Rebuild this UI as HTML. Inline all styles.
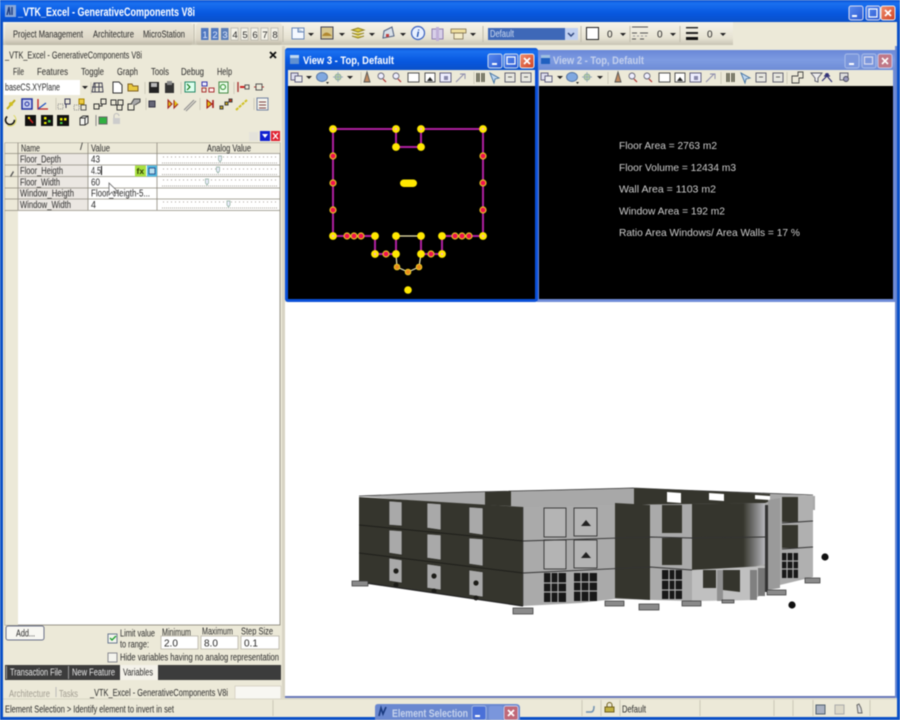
<!DOCTYPE html>
<html><head><meta charset="utf-8">
<style>
html,body{margin:0;padding:0;background:#ece9d8;width:900px;height:720px;overflow:hidden}
svg{display:block;position:absolute;left:0;top:0;filter:blur(.4px)}
text{font-family:"Liberation Sans",sans-serif;font-size:10px;fill:#2a2a2a}
.b{font-weight:bold;fill:#fff;font-size:11.5px}
.w{fill:#e8e8e8}
.t{font-size:10.5px;fill:#cfcfcf}
</style></head><body>
<svg width="900" height="720" viewBox="0 0 900 720" xmlns="http://www.w3.org/2000/svg">
<defs>
<linearGradient id="tb" x1="0" y1="0" x2="0" y2="1"><stop offset="0" stop-color="#0a4fd0"/><stop offset=".15" stop-color="#1a70f0"/><stop offset=".6" stop-color="#0858e0"/><stop offset="1" stop-color="#0a50c8"/></linearGradient>
<linearGradient id="ti" x1="0" y1="0" x2="0" y2="1"><stop offset="0" stop-color="#6a88d8"/><stop offset=".5" stop-color="#7d9be2"/><stop offset="1" stop-color="#6e8cd6"/></linearGradient>
<linearGradient id="tl" x1="0" y1="0" x2="0" y2="1"><stop offset="0" stop-color="#f6f4ea"/><stop offset=".7" stop-color="#e6e2d2"/><stop offset="1" stop-color="#c8c4b4"/></linearGradient>
<linearGradient id="tk" x1="0" y1="0" x2="0" y2="1"><stop offset="0" stop-color="#ece8da"/><stop offset=".75" stop-color="#dcd6c6"/><stop offset="1" stop-color="#bcb7a6"/></linearGradient>
<linearGradient id="cyl" x1="0" y1="0" x2="1" y2="0"><stop offset="0" stop-color="#35352d"/><stop offset=".7" stop-color="#35352d"/><stop offset="1" stop-color="#b8b8bc"/></linearGradient>
<linearGradient id="btn" x1="0" y1="0" x2="1" y2="1"><stop offset="0" stop-color="#5a8cf0"/><stop offset="1" stop-color="#2a58d0"/></linearGradient>
<linearGradient id="cls" x1="0" y1="0" x2="1" y2="1"><stop offset="0" stop-color="#f09070"/><stop offset="1" stop-color="#d04020"/></linearGradient>
</defs>

<!-- main frame -->
<rect width="900" height="720" fill="#0a50c8"/>
<rect y="0" width="900" height="22" fill="url(#tb)"/>
<rect x="3" y="22" width="894" height="695" fill="#ece9d8"/>
<!-- main title -->
<rect x="5" y="5" width="11" height="12" fill="#8aa8d8"/><path d="M7 15 L9 7 L10 15 M12 7 L12 15" stroke="#1a3a80" stroke-width="1.4" fill="none"/>
<text x="18" y="16" class="b" textLength="177" lengthAdjust="spacingAndGlyphs">_VTK_Excel - GenerativeComponents V8i</text>
<rect x="849" y="6" width="14" height="14" rx="2" fill="url(#btn)" stroke="#dde"/><rect x="852" y="15" width="5" height="2" fill="#fff"/>
<rect x="866" y="6" width="14" height="14" rx="2" fill="url(#btn)" stroke="#dde"/><rect x="869" y="9" width="8" height="8" fill="none" stroke="#fff" stroke-width="1.2"/>
<rect x="881" y="6" width="14" height="14" rx="2" fill="url(#cls)" stroke="#eee"/><path d="M885 10 L891 16 M891 10 L885 16" stroke="#fff" stroke-width="1.8"/>

<!-- main toolbar -->
<rect x="3" y="22" width="730" height="23" fill="url(#tl)"/>
<rect x="733" y="22" width="164" height="23" fill="#ece9d8"/>
<rect x="5" y="23" width="188" height="22" rx="3" fill="url(#tk)"/>
<rect x="196" y="23" width="86" height="22" rx="3" fill="url(#tk)"/>
<text x="13" y="37.500" textLength="70" lengthAdjust="spacingAndGlyphs">Project Management</text>
<text x="93" y="37.500" textLength="41" lengthAdjust="spacingAndGlyphs">Architecture</text>
<text x="143" y="37.500" textLength="42" lengthAdjust="spacingAndGlyphs">MicroStation</text>
<g fill="#f4f2e8" stroke="#a8a8a0" stroke-width=".6">
<rect x="231" y="28" width="7" height="12"/><rect x="241" y="28" width="7" height="12"/><rect x="251" y="28" width="7" height="12"/><rect x="261" y="28" width="7" height="12"/><rect x="271" y="28" width="7" height="12"/>
</g>
<rect x="201" y="28" width="7.5" height="12" fill="#4f78c0"/><rect x="211" y="28" width="7.5" height="12" fill="#4f78c0"/><rect x="221" y="28" width="7.5" height="12" fill="#5a7eb8"/>
<g text-anchor="middle"><text x="205" y="38" style="fill:#dfe8ff;font-size:9.5px">1</text><text x="215" y="38" style="fill:#dfe8ff;font-size:9.5px">2</text><text x="225" y="38" style="fill:#dfe8ff;font-size:9.5px">3</text><text x="235" y="38" style="font-size:9.5px">4</text><text x="245" y="38" style="font-size:9.5px">5</text><text x="255" y="38" style="font-size:9.5px">6</text><text x="265" y="38" style="font-size:9.5px">7</text><text x="275" y="38" style="font-size:9.5px">8</text></g>
<g fill="#222">
<path d="M308 33h6l-3 3z"/><path d="M339 33h6l-3 3z"/><path d="M369 33h6l-3 3z"/><path d="M400 33h6l-3 3z"/><path d="M470 33h6l-3 3z"/>
<path d="M620 33h6l-3 3z"/><path d="M670 33h6l-3 3z"/><path d="M720 33h6l-3 3z"/>
</g>
<rect x="292" y="28" width="12" height="11" fill="#f4f8ff" stroke="#6a88b8"/><path d="M298 28v4h6" fill="#bcd" stroke="#6a88b8"/>
<rect x="321" y="27" width="12" height="12" fill="#d8c890" stroke="#445"/><path d="M322 36 q4 -7 10 0z" fill="#b08830"/>
<path d="M352 30 l6-2 6 2 -6 2z M352 33 l6 2 6-2 M352 36 l6 2 6-2" fill="#e0d040" stroke="#908020"/>
<path d="M383 38 L384 31 L392 27 L394 36z" fill="#d8e0e8" stroke="#506080"/><rect x="386" y="34" width="3" height="3" fill="#c04040"/>
<circle cx="418" cy="33" r="6.5" fill="#e8f0ff" stroke="#3860c0" stroke-width="1.2"/><text x="416.5" y="37" style="fill:#2050b0;font-style:italic;font-weight:bold;font-size:10px">i</text>
<rect x="432" y="29" width="11" height="10" fill="#d8d0e8" stroke="#9080b0"/><rect x="436" y="27" width="3" height="14" fill="#c0b0d8"/>
<rect x="451" y="29" width="15" height="4" fill="#f0e0a0" stroke="#706040" stroke-width=".7"/><rect x="454" y="33" width="9" height="6" fill="#f4ecc8" stroke="#706040" stroke-width=".7"/>
<rect x="488" y="28" width="90" height="12" fill="#3e68b8"/><text x="490" y="37" textLength="24" lengthAdjust="spacingAndGlyphs" style="fill:#d0dcf0">Default</text>
<rect x="565" y="28" width="13" height="12" fill="#c0d0f0"/><path d="M568 33 l3 3 3-3" stroke="#304880" stroke-width="1.5" fill="none"/>
<rect x="586.5" y="27.5" width="12" height="12" fill="#fff" stroke="#222"/>
<text x="607" y="37.500">0</text><text x="657" y="37.500">0</text><text x="707" y="37.500">0</text>
<path d="M632 27h16M632 33h5M640 33h8M632 39h4M640 39h4" stroke="#555"/><path d="M633 36h14" stroke="#999" stroke-dasharray="2 2"/>
<rect x="686" y="27" width="12" height="1.4" fill="#222"/><rect x="686" y="32" width="12" height="2" fill="#222"/><rect x="686" y="37" width="12" height="3" fill="#111"/>
<g stroke="#c0bcac"><path d="M194 24v20M283 26v16M581 26v16M630 26v16M680 26v16M483 26v16"/></g>

<!-- left panel -->
<rect x="4" y="46" width="278" height="652" fill="#ece9d8"/>
<rect x="282" y="46" width="3" height="652" fill="#d8d4c4"/>
<text x="5" y="58.500" textLength="137" lengthAdjust="spacingAndGlyphs">_VTK_Excel - GenerativeComponents V8i</text>
<path d="M270 52 L276 58 M276 52 L270 58" stroke="#111" stroke-width="1.8"/>
<text x="13" y="75" textLength="11" lengthAdjust="spacingAndGlyphs">File</text><text x="37" y="75" textLength="31" lengthAdjust="spacingAndGlyphs">Features</text><text x="81" y="75" textLength="23" lengthAdjust="spacingAndGlyphs">Toggle</text><text x="117" y="75" textLength="21" lengthAdjust="spacingAndGlyphs">Graph</text><text x="151" y="75" textLength="18" lengthAdjust="spacingAndGlyphs">Tools</text><text x="181" y="75" textLength="23" lengthAdjust="spacingAndGlyphs">Debug</text><text x="217" y="75" textLength="15" lengthAdjust="spacingAndGlyphs">Help</text>
<rect x="4" y="80" width="76" height="15" fill="#fff"/><text x="5" y="90.500" textLength="55" lengthAdjust="spacingAndGlyphs">baseCS.XYPlane</text>
<path d="M82 86h6l-3 3z" fill="#222"/>
<!-- icons row 1 -->
<g stroke-width="1" fill="none">
<path d="M92 92l2-9 8 0 1 9z M95 83v9M99 83v9M92 87h11" stroke="#445"/>
<path d="M113 82h6l3 3v8h-9z" fill="#fff" stroke="#333"/>
<path d="M128 91v-7h4l1 2h5v5z" fill="#e8c840" stroke="#806020"/>
<rect x="149" y="82" width="10" height="11" fill="#222"/><rect x="151" y="83" width="6" height="4" fill="#bbb"/>
<rect x="165" y="83" width="9" height="10" fill="#333"/><rect x="167" y="81" width="5" height="4" fill="#888"/>
<rect x="185" y="82" width="10" height="10" fill="#dfe" stroke="#286"/><path d="M187 84l3 3-3 3" stroke="#060"/>
<rect x="202" y="82" width="5" height="4" stroke="#33a" fill="#eef"/><rect x="209" y="88" width="5" height="4" stroke="#a33" fill="#fee"/><rect x="202" y="88" width="4" height="4" stroke="#a33"/>
<rect x="219" y="82" width="9" height="11" fill="#efe" stroke="#484"/><circle cx="223" cy="87" r="2.5" stroke="#282"/>
<path d="M238 82v10" stroke="#a33" stroke-width="1.4"/><path d="M240 87h5" stroke="#c22" stroke-width="2"/><rect x="245" y="85" width="4" height="4" stroke="#555"/>
<rect x="256" y="84" width="6" height="6" stroke="#555"/><path d="M254 87h2M262 87h2" stroke="#a33"/>
</g>
<!-- icons row 2 -->
<g stroke-width="1" fill="none">
<path d="M7 109l8-9" stroke="#c0b020" stroke-width="2"/><circle cx="11" cy="104" r="2" fill="#d0c020"/>
<rect x="22" y="99" width="10" height="10" stroke="#2030a0" stroke-width="1.5" fill="#c8d0f0"/><circle cx="27" cy="104" r="2" stroke="#2030a0"/>
<path d="M38 99v10h10" stroke="#c02020" stroke-width="1.3"/><path d="M38 109l8-6" stroke="#2050c0" stroke-width="1.3"/>
<rect x="58" y="104" width="5" height="5" stroke="#888" stroke-dasharray="1 1"/><rect x="65" y="99" width="5" height="5" stroke="#335"/><path d="M66 104v4" stroke="#335"/>
<rect x="74" y="105" width="5" height="5" stroke="#888" stroke-dasharray="1 1"/><rect x="79" y="99" width="5" height="5" stroke="#a80" fill="#ec4"/><rect x="81" y="105" width="5" height="5" stroke="#555"/>
<rect x="94" y="104" width="5" height="5" stroke="#333"/><rect x="101" y="99" width="5" height="5" stroke="#333"/><path d="M99 106h3v-2" stroke="#333"/>
<rect x="111" y="100" width="5" height="5" stroke="#333"/><rect x="118" y="100" width="5" height="5" stroke="#333"/><rect x="117" y="105" width="5" height="5" stroke="#333"/>
<rect x="128" y="104" width="6" height="6" stroke="#333"/><path d="M131 104l3-5h6v3l-5 3" fill="#aaa" stroke="#444"/>
<rect x="149" y="101" width="6" height="6" fill="#667" stroke="#334"/>
<path d="M168 100v8l4-4zM174 100v8l4-4" fill="#e0c010" stroke="#a02020"/>
<path d="M184 110l10-10M186 111l10-10" stroke="#909090" stroke-width="1.2"/>
<path d="M207 100v8l5-4z" fill="#e0c010" stroke="#a01010"/><path d="M213 100v8" stroke="#a01010" stroke-width="1.5"/>
<rect x="220" y="106" width="3" height="3" fill="#c0a010" stroke="#444"/><rect x="225" y="102" width="3" height="3" fill="#c0a010" stroke="#444"/><rect x="229" y="99" width="3" height="3" fill="#c03010" stroke="#444"/>
<path d="M236 110l11-10" stroke="#d0c020" stroke-width="2" stroke-dasharray="3 1"/>
<rect x="257" y="98" width="11" height="12" fill="#f4f4ec" stroke="#7080a0"/><path d="M259 102h7M259 105h7M259 108h7" stroke="#804040"/>
</g>
<!-- icons row 3 -->
<g fill="none">
<circle cx="10" cy="120" r="4.5" stroke="#111" stroke-width="1.6" stroke-dasharray="18 10"/><circle cx="10" cy="120" r="6" stroke="#dcd860" stroke-width="1" stroke-dasharray="12 20"/>
<rect x="25" y="115" width="11" height="11" fill="#111"/><path d="M28 117l5 6" stroke="#d02020" stroke-width="1.4"/><rect x="28" y="117" width="2" height="2" fill="#ee0"/>
<rect x="41" y="115" width="12" height="11" fill="#111"/><rect x="44" y="117" width="2.5" height="2.5" fill="#ee0"/><rect x="48" y="120" width="2.5" height="2.5" fill="#4c4"/><rect x="44" y="122" width="2.5" height="2" fill="#ee0"/>
<rect x="57" y="115" width="12" height="11" fill="#111"/><rect x="60" y="118" width="2.5" height="2.5" fill="#ee0"/><rect x="64" y="118" width="2.5" height="2.5" fill="#ee0"/><rect x="60" y="122" width="2.5" height="2" fill="#4c4"/>
<path d="M80 118l3-2h5v7l-3 2h-5z M80 118h5v7M85 118l3-2" stroke="#333" fill="#f4f4f0"/>
<path d="M96 115v11" stroke="#888"/><rect x="99" y="117" width="8" height="7" fill="#30b040" stroke="#666"/>
<rect x="113" y="118" width="7" height="6" fill="#ccc"/><path d="M114 118v-2a2.500 2.500 0 0 1 5 0" stroke="#bbb"/>
</g>
<g stroke="#cfcbbb"><path d="M91 82v12M145 82v12M181 82v12M234 82v12M56 98v12M146 98v12M200 98v12M254 98v12"/></g>

<!-- table header icons -->
<rect x="260" y="131" width="10" height="10" fill="#1020d0"/><path d="M262 134h6l-3 4z" fill="#fff"/>
<rect x="271" y="131" width="9" height="10" fill="#e02030"/><path d="M273 133l5 6M278 133l-5 6" stroke="#fff" stroke-width="1.3"/>
<rect x="249" y="132" width="9" height="9" fill="#e4e2da"/>
<!-- table -->
<rect x="5" y="143" width="275" height="482" fill="#fff" stroke="#807c70" stroke-width=".8"/>
<rect x="5" y="143" width="275" height="10" fill="#ece9d8"/>
<rect x="5" y="153" width="13" height="472" fill="#ece9d8"/>
<rect x="18" y="153" width="70" height="57" fill="#ebe7e2"/>
<g stroke="#8e8a7e" stroke-width=".8">
<path d="M18 143v67M88 143v67M157 143v67"/>
<path d="M5 153.500h275M5 165h275M5 176.500h275M5 188h275M5 199h275M5 210.500h275" />
</g>
<text x="21" y="151.500" textLength="19" lengthAdjust="spacingAndGlyphs">Name</text><text x="80" y="150">/</text><text x="91" y="151.500" textLength="19" lengthAdjust="spacingAndGlyphs">Value</text><text x="207" y="151.500" textLength="44" lengthAdjust="spacingAndGlyphs">Analog Value</text>
<text x="20" y="162.500" textLength="41" lengthAdjust="spacingAndGlyphs">Floor_Depth</text><text x="20" y="174" textLength="43" lengthAdjust="spacingAndGlyphs">Floor_Heigth</text><text x="20" y="185.500" textLength="40" lengthAdjust="spacingAndGlyphs">Floor_Width</text><text x="20" y="196.500" textLength="54" lengthAdjust="spacingAndGlyphs">Window_Heigth</text><text x="20" y="208" textLength="51" lengthAdjust="spacingAndGlyphs">Window_Width</text>
<text x="91" y="162.500" textLength="9" lengthAdjust="spacingAndGlyphs">43</text><text x="91" y="174" textLength="10" lengthAdjust="spacingAndGlyphs">4.5</text><text x="91" y="185.500" textLength="9" lengthAdjust="spacingAndGlyphs">60</text><text x="91" y="196.500" textLength="59" lengthAdjust="spacingAndGlyphs">Floor_Heigth-5...</text><text x="91" y="208" textLength="5" lengthAdjust="spacingAndGlyphs">4</text>
<path d="M101.500 166v9" stroke="#111"/>
<path d="M10 176l3-5 1 1-3 5z" fill="#555"/>
<rect x="135" y="165.500" width="11" height="11" fill="#a8e040"/><text x="136.500" y="174" style="font-size:8.500px;font-weight:bold;fill:#304000">fx</text>
<rect x="147" y="165.500" width="10" height="11" fill="#50b8e0"/><rect x="149" y="168" width="6" height="6" fill="#b8e0f0" stroke="#204080" stroke-width=".8"/>
<!-- sliders -->
<g stroke="#a8a49c">
<path d="M162 163h116" stroke-dasharray="1 1"/><path d="M162 174.500h116" stroke-dasharray="1 1"/><path d="M162 186h116" stroke-dasharray="1 1"/><path d="M162 208h116" stroke-dasharray="1 1"/>
<path d="M163 157h116" stroke-dasharray="1 3"/><path d="M163 169h116" stroke-dasharray="1 3"/><path d="M163 180h116" stroke-dasharray="1 3"/><path d="M163 202h116" stroke-dasharray="1 3"/>
</g>
<g fill="#eef" stroke="#8a9" stroke-width=".7"><path d="M218.500 156h3v4l-1.500 2-1.500-2z"/><path d="M216.500 167h3v4l-1.500 2-1.500-2z"/><path d="M205.500 179h3v4l-1.500 2-1.500-2z"/><path d="M227 201h3v4l-1.500 2-1.500-2z"/></g>
<!-- cursor -->
<path d="M109 183v12l3-3 2 4 1.500-.7-2-4h4z" fill="#fff" stroke="#555" stroke-width=".7"/>

<!-- bottom controls -->
<rect x="6" y="626" width="38" height="14" rx="2" fill="#f8f7f2" stroke="#6a7088"/><text x="16" y="636.500" textLength="19" lengthAdjust="spacingAndGlyphs">Add...</text>
<rect x="108" y="634" width="9" height="9" fill="#f4f4ee" stroke="#6a7a90"/><path d="M110 638l2 2 4-4" stroke="#20a030" stroke-width="1.4" fill="none"/>
<text x="120" y="636.500" textLength="35" lengthAdjust="spacingAndGlyphs">Limit value</text><text x="120" y="647.500" textLength="29" lengthAdjust="spacingAndGlyphs">to range:</text>
<text x="162" y="635.500" textLength="29" lengthAdjust="spacingAndGlyphs">Minimum</text><text x="202" y="634.500" textLength="31" lengthAdjust="spacingAndGlyphs">Maximum</text><text x="241" y="634.500" textLength="32" lengthAdjust="spacingAndGlyphs">Step Size</text>
<g fill="#fff" stroke="#b8b4a8" stroke-width=".8"><rect x="161" y="636" width="37" height="13"/><rect x="201" y="636" width="37" height="13"/><rect x="241" y="636" width="38" height="13"/></g>
<text x="164" y="646.500">2.0</text><text x="204" y="646.500">8.0</text><text x="244" y="646.500">0.1</text>
<rect x="108" y="653" width="9" height="9" fill="#f4f4ee" stroke="#8a8a90"/>
<text x="120" y="660.500" textLength="159" lengthAdjust="spacingAndGlyphs">Hide variables having no analog representation</text>
<rect x="5" y="665" width="276" height="15" fill="#3c3c3c"/>
<rect x="120" y="665" width="38" height="15" fill="#f4f2ea"/>
<text x="10" y="675.500" textLength="52" lengthAdjust="spacingAndGlyphs" class="w">Transaction File</text><text x="72" y="675.500" textLength="43" lengthAdjust="spacingAndGlyphs" class="w">New Feature</text><text x="123" y="675.500" textLength="30" lengthAdjust="spacingAndGlyphs">Variables</text>
<path d="M6.500 666v13M68.500 666v13" stroke="#999"/>
<text x="9" y="697" textLength="41" lengthAdjust="spacingAndGlyphs" style="fill:#a09c90">Architecture</text><path d="M56 687v10" stroke="#bbb"/><text x="59" y="697" textLength="19" lengthAdjust="spacingAndGlyphs" style="fill:#a09c90">Tasks</text>
<text x="90" y="696" textLength="138" lengthAdjust="spacingAndGlyphs">_VTK_Excel - GenerativeComponents V8i</text>
<rect x="235" y="686" width="46" height="13" fill="#f8f7f2" stroke="#c8c4b4" stroke-width=".6"/>

<!-- white model area -->
<rect x="285" y="302" width="610" height="394" fill="#fff"/>
<rect x="285" y="696" width="610" height="2" fill="#6878b8"/>
<rect x="895" y="46" width="2" height="652" fill="#6a88d0"/>

<!-- View 2 -->
<rect x="537" y="50" width="358" height="252" fill="#6f8cd8"/>
<rect x="537" y="50" width="358" height="20" fill="url(#ti)"/>
<rect x="541" y="55" width="9" height="9" fill="#2060c0"/><rect x="541" y="55" width="9" height="3" fill="#a0c0e0"/>
<text x="553" y="64" textLength="91" lengthAdjust="spacingAndGlyphs" style="fill:#c4d0ec;font-weight:bold;font-size:11px">View 2 - Top, Default</text>
<rect x="845" y="54" width="14" height="14" rx="2" fill="#7a96dc" stroke="#a8bce8"/><rect x="849" y="63" width="5" height="2" fill="#fff"/>
<rect x="862" y="54" width="14" height="14" rx="2" fill="#7a96dc" stroke="#a8bce8"/><rect x="864.500" y="57" width="8" height="7" fill="none" stroke="#dde" stroke-width="1.200"/>
<rect x="878" y="54" width="14" height="14" rx="2" fill="#c07888" stroke="#c8c8e8"/><path d="M882 58l6 6M888 58l-6 6" stroke="#fff" stroke-width="1.600"/>
<rect x="539" y="70" width="354" height="16" fill="#ece9d8"/>
<rect x="539" y="86" width="354" height="213" fill="#000"/>

<!-- View 3 -->
<rect x="285" y="48" width="253" height="254" rx="3" fill="#0a50d8"/>
<rect x="285" y="48" width="253" height="22" rx="3" fill="url(#tb)"/>
<rect x="290" y="55" width="9" height="9" fill="#6090d0"/><rect x="290" y="55" width="9" height="3" fill="#c0d8f0"/>
<text x="303" y="64" textLength="91" lengthAdjust="spacingAndGlyphs" class="b" style="font-size:11px">View 3 - Top, Default</text>
<rect x="488" y="54" width="14" height="14" rx="2" fill="url(#btn)" stroke="#cde"/><rect x="492" y="63" width="5" height="2" fill="#fff"/>
<rect x="504" y="54" width="14" height="14" rx="2" fill="url(#btn)" stroke="#cde"/><rect x="507" y="57" width="8" height="7" fill="none" stroke="#fff" stroke-width="1.200"/>
<rect x="520" y="54" width="14" height="14" rx="2" fill="url(#cls)" stroke="#eee"/><path d="M524 58l6 6M530 58l-6 6" stroke="#fff" stroke-width="1.800"/>
<rect x="288" y="70" width="247" height="16" fill="#ece9d8"/>
<rect x="288" y="86" width="247" height="213" fill="#000"/>

<!-- view toolbars -->
<g fill="none" stroke-width=".9">
<rect x="291" y="73" width="7" height="7" stroke="#557" fill="#dde"/><rect x="295" y="76" width="7" height="6" stroke="#557" fill="#eee"/><path d="M306 76h6l-3 3z" fill="#222"/>
<ellipse cx="322" cy="77" rx="5.500" ry="4.500" fill="#80a8e0" stroke="#5070a0"/><path d="M326 82h3l-1.500 2z" fill="#222"/>
<circle cx="338" cy="77" r="3" fill="#c0d8a0" stroke="#8a9"/><path d="M338 72v10M333 77h10" stroke="#9ab"/><path d="M347 76h6l-3 3z" fill="#222"/>
<path d="M367 72l-3 10h6z" fill="#c08a60" stroke="#555"/>
<circle cx="381" cy="76" r="3" fill="#eef" stroke="#667"/><path d="M383 79l3 3" stroke="#b03030" stroke-width="1.200"/>
<circle cx="396" cy="76" r="3" fill="#eef" stroke="#667"/><path d="M398 79l3 3" stroke="#b03030" stroke-width="1.200"/>
<rect x="408" y="73" width="11" height="9" fill="#fff" stroke="#444"/>
<rect x="425" y="73" width="10" height="9" fill="#fff" stroke="#444"/><path d="M427 81l3-4 3 4z" fill="#222"/>
<rect x="440" y="73" width="11" height="9" fill="#eef" stroke="#557"/><rect x="444" y="76" width="4" height="4" fill="#88a"/>
<path d="M456 82l8-8M460 74h5v5" stroke="#88a"/>
<path d="M477 73v9M479 73v9M482 73v9M484 73v9" stroke="#443" stroke-width="1.300"/>
<path d="M490 73l9 5-4 1-1 4z" fill="#c0d8f0" stroke="#4070a0"/>
<rect x="505" y="73" width="10" height="9" fill="#e8e8e0" stroke="#556"/><path d="M508 77h4" stroke="#555"/>
<rect x="521" y="73" width="10" height="9" fill="#e8e8e0" stroke="#556"/><path d="M524 77h4" stroke="#555"/>
</g>
<g fill="none" stroke-width=".9">
<rect x="541" y="73" width="7" height="7" stroke="#557" fill="#dde"/><rect x="545" y="76" width="7" height="6" stroke="#557" fill="#eee"/><path d="M557 76h6l-3 3z" fill="#222"/>
<ellipse cx="572" cy="77" rx="5.500" ry="4.500" fill="#80a8e0" stroke="#5070a0"/><path d="M576 82h3l-1.500 2z" fill="#222"/>
<circle cx="587" cy="77" r="3" fill="#c0d8a0" stroke="#8a9"/><path d="M587 72v10M582 77h10" stroke="#9ab"/><path d="M597 76h6l-3 3z" fill="#222"/>
<path d="M618 72l-3 10h6z" fill="#c08a60" stroke="#555"/>
<circle cx="632" cy="76" r="3" fill="#eef" stroke="#667"/><path d="M634 79l3 3" stroke="#b03030" stroke-width="1.200"/>
<circle cx="647" cy="76" r="3" fill="#eef" stroke="#667"/><path d="M649 79l3 3" stroke="#b03030" stroke-width="1.200"/>
<rect x="659" y="73" width="11" height="9" fill="#fff" stroke="#444"/>
<rect x="675" y="73" width="10" height="9" fill="#fff" stroke="#444"/><path d="M677 81l3-4 3 4z" fill="#222"/>
<rect x="690" y="73" width="11" height="9" fill="#eef" stroke="#557"/><rect x="694" y="76" width="4" height="4" fill="#88a"/>
<path d="M706 82l8-8M710 74h5v5" stroke="#88a"/>
<path d="M727 73v9M729 73v9M732 73v9M734 73v9" stroke="#443" stroke-width="1.300"/>
<path d="M741 73l9 5-4 1-1 4z" fill="#c0d8f0" stroke="#4070a0"/>
<rect x="756" y="73" width="10" height="9" fill="#e8e8e0" stroke="#556"/><path d="M759 77h4" stroke="#555"/>
<rect x="773" y="73" width="10" height="9" fill="#e8e8e0" stroke="#556"/><path d="M776 77h4" stroke="#555"/>
<path d="M792 76h6v-4h5v6h-4v5h-7z" stroke="#444"/>
<path d="M811 73h11l-4 5v4l-3-1v-3z" fill="#eee" stroke="#556"/>
<circle cx="827" cy="75" r="2" fill="#337"/><path d="M822 81l5-5 5 6M824 76h6" stroke="#337" stroke-width="1.200"/>
<rect x="840" y="73" width="8" height="7" fill="#ddd" stroke="#556"/><circle cx="846" cy="79" r="2.500" fill="#99b" stroke="#445"/>
</g>
<path d="M361 72v12M474 72v12M608 72v12M721 72v12M787 72v12" stroke="#cfcbbb"/>

<!-- plan -->
<g fill="none" stroke-linejoin="miter">
<path d="M333 129H396V147H421V129H483V236H442V254H421V236M396 236V254H375V236H333V129" stroke="#b020a0" stroke-width="2"/>
<path d="M396 236H421M396 254L397 267 408 272 419 267 421 254" stroke="#f0e8b0" stroke-width="1.200"/>
</g>
<g fill="#ffe800">
<circle cx="333" cy="129" r="3.900"/><circle cx="396" cy="129" r="3.900"/><circle cx="421" cy="129" r="3.900"/><circle cx="483" cy="129" r="3.900"/><circle cx="396" cy="147" r="3.900"/><circle cx="421" cy="147" r="3.900"/>
<circle cx="333" cy="236" r="3.900"/><circle cx="483" cy="236" r="3.900"/>
<circle cx="375" cy="236" r="3.900"/><circle cx="396" cy="236" r="3.900"/><circle cx="421" cy="236" r="3.900"/><circle cx="442" cy="236" r="3.900"/>
<circle cx="375" cy="254" r="3.900"/><circle cx="396" cy="254" r="3.900"/><circle cx="421" cy="254" r="3.900"/><circle cx="442" cy="254" r="3.900"/>
<circle cx="408" cy="290" r="3.800"/><rect x="400" y="179.500" width="17" height="7.500" rx="3.700"/>
</g>
<g fill="#f01050" stroke="#e8c020" stroke-width="1.200">
<circle cx="333" cy="156" r="3"/><circle cx="333" cy="183" r="3"/><circle cx="333" cy="210" r="3"/>
<circle cx="483" cy="156" r="3"/><circle cx="483" cy="183" r="3"/><circle cx="483" cy="210" r="3"/>
<circle cx="347" cy="236" r="3"/><circle cx="354" cy="236" r="3"/><circle cx="361" cy="236" r="3"/><circle cx="455" cy="236" r="3"/><circle cx="462" cy="236" r="3"/><circle cx="469" cy="236" r="3"/>
<circle cx="386" cy="254" r="3"/><circle cx="431" cy="254" r="3"/>
</g>
<g fill="#e88a20" stroke="#f0d020" stroke-width="1"><circle cx="397" cy="267" r="2.800"/><circle cx="408" cy="272" r="2.800"/><circle cx="419" cy="267" r="2.800"/></g>
<g fill="#ffb0c0"><rect x="332" y="128" width="2" height="2"/><rect x="482" y="128" width="2" height="2"/><rect x="395" y="128" width="2" height="2"/><rect x="420" y="128" width="2" height="2"/><rect x="332" y="235" width="2" height="2"/><rect x="482" y="235" width="2" height="2"/><rect x="374" y="253" width="2" height="2"/><rect x="441" y="253" width="2" height="2"/></g>

<!-- info text -->
<text x="619" y="149" class="t" textLength="98" lengthAdjust="spacingAndGlyphs">Floor Area = 2763 m2</text>
<text x="619" y="171" class="t" textLength="117" lengthAdjust="spacingAndGlyphs">Floor Volume = 12434 m3</text>
<text x="619" y="192.500" class="t" textLength="97" lengthAdjust="spacingAndGlyphs">Wall Area = 1103 m2</text>
<text x="619" y="214.500" class="t" textLength="106" lengthAdjust="spacingAndGlyphs">Window Area = 192 m2</text>
<text x="619" y="236" class="t" textLength="181" lengthAdjust="spacingAndGlyphs">Ratio Area Windows/ Area Walls = 17 %</text>

<!-- building -->
<!-- roof -->
<polygon points="359,496 408,494 470,492 557,490 633,488 680,490 760,493 815,496 815,510 523,510" fill="#a8a8a8"/>
<path d="M359 496L408 494 470 492 557 490 633 488 680 490 760 493 813 495" fill="none" stroke="#333" stroke-width=".7"/>
<polygon points="485,492 511,491 511,506 485,505" fill="#35352d"/>
<polygon points="634,488 684,490 770,494 770,510 634,510" fill="#35352d"/>
<polygon points="667,492 681,493 681,503 667,502" fill="#fff"/>
<polygon points="709,493 724,494 724,501 709,500" fill="#fff"/>
<polygon points="755,495 770,496 770,500 755,499" fill="#fff"/>
<!-- left dark wall -->
<polygon points="359,497 523,507 523,606 359,582" fill="#35352d"/>
<g fill="#a9a9a9" stroke="#2a2a24" stroke-width=".6">
<polygon points="389,501 402,502 402,526 389,525"/><polygon points="389,530 402,531 402,555 389,553"/><polygon points="389,558 402,560 402,583 389,581"/>
<polygon points="427,503 441,504 441,530 427,528"/><polygon points="427,534 441,535 441,560 427,558"/><polygon points="427,564 441,566 441,590 427,588"/>
<polygon points="469,507 483,508 483,535 469,533"/><polygon points="469,538 483,539 483,566 469,564"/><polygon points="469,570 483,572 483,597 469,595"/>
</g>
<g fill="#1c1c18"><circle cx="396" cy="571" r="2.600"/><circle cx="434" cy="576" r="2.600"/><circle cx="476" cy="583" r="2.600"/><circle cx="396" cy="585" r="2.500"/><circle cx="434" cy="591" r="2.500"/><circle cx="476" cy="598" r="2.500"/></g>
<path d="M359 525L523 541M359 553L523 573" fill="none" stroke="#1e1e1a" stroke-width="1"/>
<path d="M359 582L523 606" fill="none" stroke="#222" stroke-width="1.200"/>
<!-- right gray wall -->
<polygon points="523,507 597,505 690,504 765,503 780,497 813,495 813,577 780,585 765,592 753,600 690,601 615,599 580,603 523,606" fill="#aaaaaa"/>
<!-- front windows -->
<g fill="#b4b4b4" stroke="#333" stroke-width=".9">
<rect x="544" y="508" width="22" height="29"/><rect x="544" y="540" width="22" height="29"/>
<rect x="574" y="508" width="23" height="28"/><rect x="574" y="540" width="23" height="28"/>
</g>
<path d="M581 526l5-6 5 6zM581 558l5-6 5 6z" fill="#222"/>
<g fill="#181818"><rect x="544" y="573" width="22" height="29"/><rect x="574" y="573" width="23" height="28"/><rect x="662" y="570" width="20" height="29"/><rect x="782" y="553" width="16" height="25"/></g>
<g stroke="#a8a8a8" stroke-width="1.200"><path d="M551 573v29M558 573v29M544 583h22M544 592h22M581 573v28M589 573v28M574 582h23M574 591h23M669 570v29M675 570v29M662 580h20M662 590h20M787 553v25M793 553v25M782 561h16M782 569h16"/></g>
<!-- dark panels -->
<polygon points="615,503 650,505 650,600 615,598" fill="#35352d"/>
<polygon points="662,505 682,505 682,533 662,533" fill="#35352d"/><polygon points="662,538 682,538 682,565 662,565" fill="#35352d"/>
<polygon points="692,504 750,503 765,503 765,564 750,568 692,570" fill="url(#cyl)"/>
<polygon points="768,500 780,498 780,588 768,590" fill="#9a9a9a"/>
<polygon points="765,505 768,505 768,592 765,592" fill="#333"/>
<polygon points="782,497 798,497 798,522 782,522" fill="#35352d"/><polygon points="782,525 798,525 798,548 782,548" fill="#35352d"/>
<polygon points="798,496 813,495 813,577 798,578" fill="#b0b0b0"/>
<!-- cylinder base -->
<polygon points="692,570 765,566 765,592 753,600 692,601" fill="#c0c0c0"/>
<polygon points="703,570 716,570 716,588 703,588" fill="#35352d"/>
<polygon points="723,570 740,570 740,592 723,590" fill="#35352d"/>
<rect x="717" y="570" width="6" height="31" fill="#909090"/>
<rect x="750" y="570" width="7" height="30" fill="#808080"/><rect x="758" y="568" width="7" height="28" fill="#777"/>
<path d="M523 541L650 537 692 538 765 537M523 573L650 567 692 570M782 523L813 521M782 549L813 547" fill="none" stroke="#333" stroke-width=".9"/>
<path d="M523 507V606" stroke="#333" stroke-width=".6"/>
<!-- feet -->
<g fill="#8a8a8a" stroke="#333" stroke-width=".7">
<rect x="352" y="581" width="16" height="5"/><rect x="513" y="608" width="20" height="6"/><rect x="605" y="601" width="19" height="5"/><rect x="639" y="604" width="20" height="6"/><rect x="682" y="601" width="19" height="5"/><rect x="767" y="590" width="19" height="5"/><rect x="805" y="578" width="15" height="5"/><rect x="722" y="600" width="12" height="3"/>
</g>
<circle cx="825" cy="557" r="3.600" fill="#111"/><circle cx="792" cy="605" r="3.600" fill="#111"/>

<!-- status bar -->
<rect x="3" y="699" width="894" height="18" fill="#ece9d8"/>
<path d="M3 699h894" stroke="#d8d4c4"/>
<text x="5" y="712.500" textLength="169" lengthAdjust="spacingAndGlyphs">Element Selection &gt; Identify element to invert in set</text>
<g stroke="#c4c0b0" stroke-width=".8"><path d="M273 700v16M582 700v16M601 700v16M620 700v16M700 700v16M774 700v16M793 700v16M813 700v16M870 700v16"/></g>
<path d="M586 712h5q3 0 3-6" stroke="#7090b0" stroke-width="1.500" fill="none"/>
<rect x="605" y="707" width="9" height="5" fill="#c0b040" stroke="#706020"/><path d="M607 707v-2a2.500 2.500 0 0 1 5 0v2" stroke="#706020" fill="none"/>
<text x="622" y="712.500" textLength="24" lengthAdjust="spacingAndGlyphs">Default</text>
<rect x="816" y="705" width="9" height="9" fill="#a8b0c0" stroke="#506070"/>
<rect x="835" y="705" width="9" height="9" fill="#dcd8c8" stroke="#aaa"/>
<path d="M857 705l2-1 2 4 1 5h-4z" fill="#ddd" stroke="#666"/>
<!-- taskbar item -->
<path d="M375 720v-13q0-3 3-3h138q4 0 4 4v12z" fill="#6a88d0"/>
<path d="M379 716l2-8 2 6 3-7" stroke="#1a3a80" stroke-width="1.600" fill="none"/>
<text x="392" y="717" textLength="76" lengthAdjust="spacingAndGlyphs" style="font-weight:bold;font-size:11px;fill:#c8d4ec">Element Selection</text>
<rect x="472" y="706" width="14" height="14" rx="2" fill="#4a70d8" stroke="#a0b4e0"/><rect x="475" y="715" width="5" height="2" fill="#fff"/>
<rect x="489" y="706" width="14" height="14" rx="2" fill="#7a96dc"/>
<rect x="504" y="706" width="14" height="14" rx="2" fill="#c06878" stroke="#c8c8e8"/><path d="M508 710l6 6M514 710l-6 6" stroke="#fff" stroke-width="1.800"/>
</svg>
</body></html>
